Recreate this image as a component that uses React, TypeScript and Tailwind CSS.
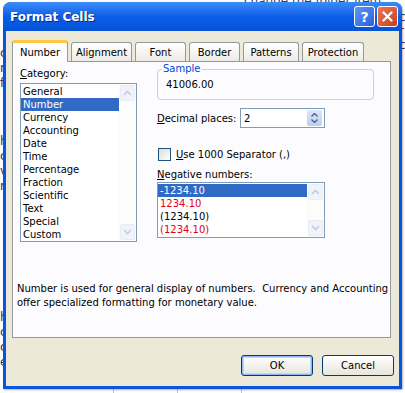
import React from "react";

const categories = [
  "General",
  "Number",
  "Currency",
  "Accounting",
  "Date",
  "Time",
  "Percentage",
  "Fraction",
  "Scientific",
  "Text",
  "Special",
  "Custom",
];

const negatives = [
  { text: "-1234.10", red: false },
  { text: "1234.10", red: true },
  { text: "(1234.10)", red: false },
  { text: "(1234.10)", red: true },
];

const tabs = [
  { label: "Number", w: "w-[56px]" },
  { label: "Alignment", w: "w-[61px]" },
  { label: "Font", w: "w-[51px]" },
  { label: "Border", w: "w-[51px]" },
  { label: "Patterns", w: "w-[56px]" },
  { label: "Protection", w: "w-[62px]" },
];

function Arrow({ up }: { up: boolean }) {
  return (
    <svg width="9" height="6" viewBox="0 0 9 6">
      <path
        d={up ? "M1 5 L4.5 1.5 L8 5" : "M1 1 L4.5 4.5 L8 1"}
        fill="none"
        stroke="#c2cde8"
        strokeWidth="1.6"
      />
    </svg>
  );
}

function ScrollBar() {
  return (
    <div className="w-[17px] h-full flex flex-col justify-between bg-[#fcfcfa] p-px">
      <div className="h-[16px] rounded-[2px] border border-[#e8ecf4] bg-[#f1f3f8] flex items-center justify-center">
        <Arrow up />
      </div>
      <div className="h-[16px] rounded-[2px] border border-[#e8ecf4] bg-[#f1f3f8] flex items-center justify-center">
        <Arrow up={false} />
      </div>
    </div>
  );
}

function Tab({ label, w, active }: { label: string; w: string; active: boolean }) {
  if (active) {
    return (
      <div
        className={`relative z-10 -mb-px h-[22px] ${w} bg-[#fcfcfe] border border-b-0 border-[#919b9c] rounded-t-[3px] border-t-[3px] border-t-[#ffc83c] flex items-center justify-center text-black`}
      >
        {label}
      </div>
    );
  }
  return (
    <div
      className={`h-[19px] mt-[2px] ml-[3px] ${w} bg-gradient-to-b from-[#ffffff] to-[#ecebe6] border border-b-0 border-[#919b9c] rounded-t-[3px] flex items-center justify-center text-black`}
    >
      {label}
    </div>
  );
}

export default function App() {
  return (
    <div
      className="relative w-[405px] h-[393px] bg-white overflow-hidden text-[10px] text-black"
      style={{ fontFamily: "'DejaVu Sans', sans-serif" }}
    >
      {/* spreadsheet behind */}
      <div className="absolute left-[244px] top-[-6px] text-[12px] leading-[14px] text-[#444]">change the folder item</div>
      <div className="absolute left-0 top-[46px] text-[12px] leading-[15px] text-[#335]">
        <div>c</div>
        <div>r</div>
        <div>f</div>
      </div>
      <div className="absolute left-0 top-[134px] text-[12px] leading-[15px] text-[#335]">
        <div>h</div>
        <div>c</div>
        <div>v</div>
        <div>r</div>
      </div>
      <div className="absolute left-0 top-[310px] text-[12px] leading-[15px] text-[#335]">
        <div>h</div>
        <div>c</div>
        <div>c</div>
        <div>e</div>
      </div>
      <div className="absolute left-[399px] top-[10px] text-[12px] leading-[14px] text-[#335]">
        <div>c</div>
        <div className="text-[#800]">r</div>
        <div>c</div>
      </div>
      <div className="absolute left-[113px] top-[386px] w-px h-[10px] bg-[#c0c0c0]" />
      <div className="absolute left-[177px] top-[386px] w-px h-[10px] bg-[#c0c0c0]" />
      <div className="absolute left-[241px] top-[386px] w-px h-[10px] bg-[#c0c0c0]" />

      {/* dialog */}
      <div className="absolute left-[3px] top-[2px] w-[399px] h-[387px] rounded-t-[8px] bg-[#0853e0] flex flex-col shadow-[1px_1px_2px_rgba(0,0,0,0.3)]">
        <div className="h-[29px] rounded-t-[8px] bg-gradient-to-b from-[#3c8cf8] via-[#0b5ee8] to-[#0652d8] flex items-center justify-between pl-[7px] pr-[4px]">
          <span className="text-white font-bold text-[12px] [text-shadow:1px_1px_0_#0a2a80]">
            Format Cells
          </span>
          <div className="flex gap-[2px]">
            <div className="w-[21px] h-[21px] rounded-[3px] border border-white bg-gradient-to-br from-[#5e95f5] to-[#2661de] flex items-center justify-center text-white font-bold text-[14px] leading-none">
              ?
            </div>
            <div className="w-[21px] h-[21px] rounded-[3px] border border-white bg-gradient-to-br from-[#e8785a] to-[#cc3b17] flex items-center justify-center">
              <svg width="11" height="11" viewBox="0 0 11 11">
                <path d="M1.5 1.5 L9.5 9.5 M9.5 1.5 L1.5 9.5" stroke="white" strokeWidth="2.2" strokeLinecap="round" />
              </svg>
            </div>
          </div>
        </div>

        <div className="flex-1 mx-[3px] mb-[3px] bg-[#ece9d8] pt-[9px] px-[6px] flex flex-col">
          {/* tabs */}
          <div className="flex items-end h-[21px]">
            {tabs.map((t, i) => (
              <Tab key={t.label} label={t.label} w={t.w} active={i === 0} />
            ))}
          </div>

          {/* panel */}
          <div className="h-[277px] w-[379px] bg-[#fcfcfe] border border-[#919b9c] relative flex flex-col">
            <div className="flex pt-[5px] pl-[7px]">
              <div className="flex flex-col w-[117px]">
                <div className="h-[14px] leading-[14px]">
                  <u>C</u>ategory:
                </div>
                <div className="mt-[2px] h-[159px] border border-[#7f9db9] bg-white flex">
                  <div className="flex-1 pt-px">
                    {categories.map((c) => (
                      <div
                        key={c}
                        className={
                          c === "Number"
                            ? "h-[13px] leading-[13px] pl-[2px] bg-[#316ac5] text-white"
                            : "h-[13px] leading-[13px] pl-[2px]"
                        }
                      >
                        {c}
                      </div>
                    ))}
                  </div>
                  <ScrollBar />
                </div>
              </div>

              <div className="ml-[20px] flex flex-col">
                <fieldset className="w-[217px] h-[37px] border border-[#d0d0bf] rounded-[4px] px-[6px] mt-[-4px]">
                  <legend className="text-[#0046d5] px-px -ml-[2px] leading-[12px]">Sample</legend>
                  <div className="pl-[2px] pt-[3px] leading-[13px]">41006.00</div>
                </fieldset>

                <div className="flex items-center mt-[8px] h-[20px]">
                  <span className="w-[83px] whitespace-nowrap">
                    <u>D</u>ecimal places:
                  </span>
                  <div className="w-[85px] h-[20px] border border-[#7f9db9] bg-white flex items-center justify-between pl-[3px] pr-[2px]">
                    <span>2</span>
                    <div className="w-[15px] h-[16px] rounded-[2px] bg-gradient-to-b from-[#dce7fb] to-[#b9cdf5] flex flex-col items-center justify-center gap-[2px]">
                      <svg width="7" height="4" viewBox="0 0 7 4">
                        <path d="M0.5 3.5 L3.5 0.5 L6.5 3.5" fill="none" stroke="#4d6185" strokeWidth="1.4" />
                      </svg>
                      <svg width="7" height="4" viewBox="0 0 7 4">
                        <path d="M0.5 0.5 L3.5 3.5 L6.5 0.5" fill="none" stroke="#4d6185" strokeWidth="1.4" />
                      </svg>
                    </div>
                  </div>
                </div>

                <div className="flex items-center mt-[20px] h-[13px]">
                  <div className="w-[13px] h-[13px] border border-[#1c5180] bg-gradient-to-br from-[#dcdcd7] to-white ml-px" />
                  <span className="ml-[5px]">
                    <u>U</u>se 1000 Separator (,)
                  </span>
                </div>

                <div className="mt-[7px] h-[14px] leading-[14px]">
                  <u>N</u>egative numbers:
                </div>
                <div className="w-[168px] h-[56px] border border-[#7f9db9] bg-white flex">
                  <div className="flex-1 pt-px">
                    {negatives.map((n, i) => (
                      <div
                        key={i}
                        className={
                          i === 0
                            ? "h-[13px] leading-[13px] pl-[2px] bg-[#316ac5] text-white"
                            : n.red
                            ? "h-[13px] leading-[13px] pl-[2px] text-[#e0001b]"
                            : "h-[13px] leading-[13px] pl-[2px]"
                        }
                      >
                        {n.text}
                      </div>
                    ))}
                  </div>
                  <ScrollBar />
                </div>
              </div>
            </div>

            <div className="mt-[40px] pl-[4px] leading-[14px] whitespace-pre">
              {"Number is used for general display of numbers.  Currency and Accounting\noffer specialized formatting for monetary value."}
            </div>
          </div>

          {/* buttons */}
          <div className="flex justify-end gap-[9px] mt-[17px] -mr-px">
            <button className="w-[72px] h-[21px] rounded-[3px] border border-[#003c74] bg-gradient-to-b from-white to-[#e6e6dc] shadow-[inset_0_0_0_1px_#91b5f0,inset_0_0_0_2px_#c0d6fa]">
              OK
            </button>
            <button className="w-[72px] h-[21px] rounded-[3px] border border-[#003c74] bg-gradient-to-b from-white to-[#e6e6dc]">
              Cancel
            </button>
          </div>
        </div>
      </div>
    </div>
  );
}
